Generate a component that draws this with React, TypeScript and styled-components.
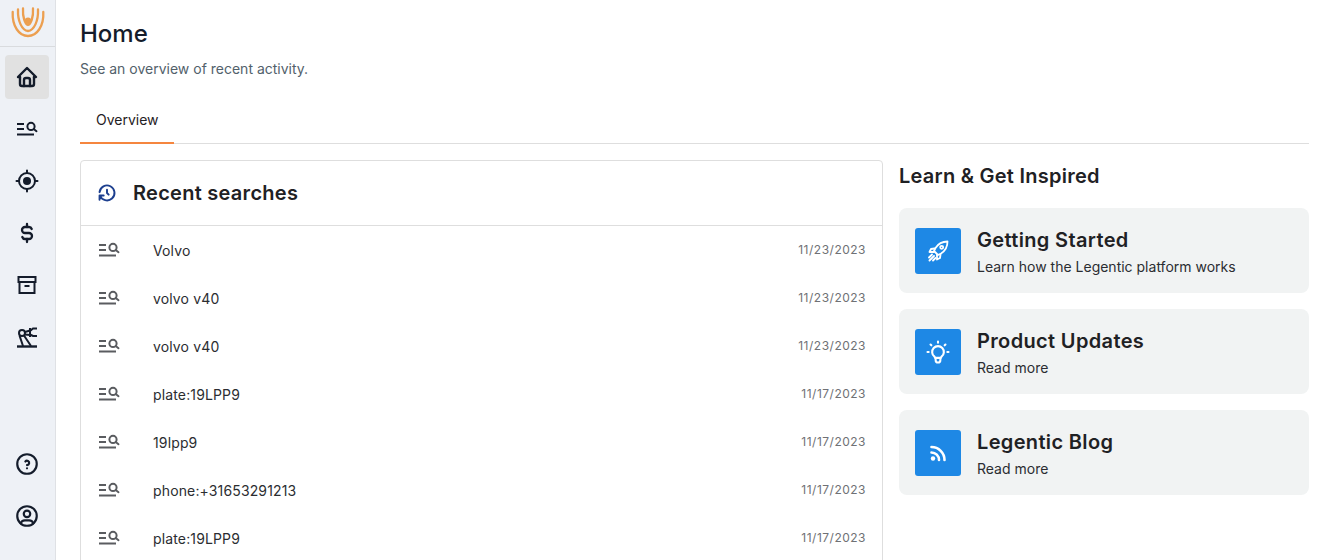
import React from 'react';
import styled, { createGlobalStyle } from 'styled-components';
import {
  TbBulb,
  TbCurrencyDollar,
  TbHelpCircle,
  TbHistory,
  TbHome,
  TbUserCircle
} from 'react-icons/tb';

const GlobalStyle = createGlobalStyle`
  html, body {
    margin: 0;
    height: 100%;
    overflow: hidden;
    background: #fff;
    font-family: Inter, "Liberation Sans", sans-serif;
    color: #1f2124;
  }
  * { box-sizing: border-box; }
`;

const searches = [
  { term: 'Volvo', date: '11/23/2023' },
  { term: 'volvo v40', date: '11/23/2023' },
  { term: 'volvo v40', date: '11/23/2023' },
  { term: 'plate:19LPP9', date: '11/17/2023' },
  { term: '19lpp9', date: '11/17/2023' },
  { term: 'phone:+31653291213', date: '11/17/2023' },
  { term: 'plate:19LPP9', date: '11/17/2023' }
];

const LogoIcon = () => (
  <svg width="34" height="34" viewBox="0 0 34 34" fill="none" stroke="#ec9f50" strokeWidth="2.300" strokeLinecap="round">
    <circle cx="17" cy="14.700" r="3.200" fill="#ec9f50" stroke="none" />
    <path d="M12 2.500C11.500 11 14 18 17 19C20 18 22.500 11 22 2.500" />
    <path d="M7 3.500C6.500 15 11 24.500 17 25C23 24.500 27.500 15 27 3.500" />
    <path d="M1.700 6C1 20 8 30 17 30C26 30 33 20 32.300 6" />
  </svg>
);

const SearchListIcon = () => (
  <svg width="24" height="24" viewBox="0 0 24 24" fill="none" stroke="currentColor" strokeWidth="2">
    <path d="M2 7h7M2 12h7M2 17.500h17" />
    <circle cx="16" cy="9.400" r="3.600" />
    <path d="M18.700 12l2.800 2.200" strokeLinecap="round" />
  </svg>
);

const TargetIcon = () => (
  <svg width="24" height="24" viewBox="0 0 24 24" fill="none" stroke="currentColor" strokeWidth="2" strokeLinecap="round">
    <circle cx="12" cy="12" r="8" />
    <circle cx="12" cy="12" r="4" fill="currentColor" stroke="none" />
    <path d="M12 1.500V4M12 20v2.500M1.500 12H4M20 12h2.500" />
  </svg>
);

const ArchiveIcon = () => (
  <svg width="24" height="24" viewBox="0 0 24 24" fill="none" stroke="currentColor" strokeWidth="2">
    <path d="M3.500 4h17v5h-17z" />
    <path d="M4.500 9v11h15V9" />
    <path d="M9.500 13h5" />
  </svg>
);

const ArmIcon = () => (
  <svg width="24" height="24" viewBox="0 0 24 24" fill="none" stroke="currentColor" strokeWidth="2">
    <path d="M2 21.500h20" strokeWidth="2.400" />
    <circle cx="7" cy="8" r="3" />
    <path d="M4.500 10.500L8 21M9 10.500L16 21" />
    <path d="M10 7l5-1.500M10 9.500l5 .5M15 3v9" />
    <path d="M15 6l3-2.500h4M15 9.500l3 1.500h4" />
  </svg>
);

const RocketIcon = () => (
  <svg width="24" height="24" viewBox="0 0 24 24" fill="none" stroke="#fff" strokeWidth="1.800" strokeLinejoin="round" strokeLinecap="round">
    <path d="M21.500 2.500C16.500 2.500 12 5 9.500 9L8 12l4 4 3-1.500c4-2.500 6.500-7 6.500-12z" />
    <path d="M8.500 9.500L5 10l-1.500 3H8M14.500 15.500L14 19l-3 1.500V16" />
    <circle cx="15.700" cy="8.300" r="1.500" />
    <path d="M6 15.500l-3 3M8 17l-4.500 4.500M9.500 19L7 21.500" />
  </svg>
);

const RssIcon = () => (
  <svg width="24" height="24" viewBox="0 0 24 24" fill="none" stroke="#fff" strokeWidth="2.600" strokeLinecap="round">
    <circle cx="7" cy="17.500" r="2.200" fill="#fff" stroke="none" />
    <path d="M5.500 11.500a7.500 7.500 0 0 1 7.500 7.500" />
    <path d="M5.500 6a13 13 0 0 1 13 13" />
  </svg>
);

const learnCards = [
  { title: 'Getting Started', text: 'Learn how the Legentic platform works', icon: <RocketIcon /> },
  { title: 'Product Updates', text: 'Read more', icon: <TbBulb size={28} strokeWidth={1.8} /> },
  { title: 'Legentic Blog', text: 'Read more', icon: <RssIcon /> }
];

const App = () => {
  return (
    <>
      <GlobalStyle />
      <S.Page>
        <S.Sidebar>
          <S.LogoArea>
            <LogoIcon />
          </S.LogoArea>
          <S.NavTop>
            <S.NavButton $active><TbHome size={24} strokeWidth={2.4} /></S.NavButton>
            <S.NavButton><SearchListIcon /></S.NavButton>
            <S.NavButton><TargetIcon /></S.NavButton>
            <S.NavButton><TbCurrencyDollar size={24} strokeWidth={2.3} /></S.NavButton>
            <S.NavButton><ArchiveIcon /></S.NavButton>
            <S.NavButton><ArmIcon /></S.NavButton>
          </S.NavTop>
          <S.NavBottom>
            <S.NavButton><TbHelpCircle size={26} /></S.NavButton>
            <S.NavButton><TbUserCircle size={26} /></S.NavButton>
          </S.NavBottom>
        </S.Sidebar>
        <S.Main>
          <S.Title>Home</S.Title>
          <S.Subtitle>See an overview of recent activity.</S.Subtitle>
          <S.Tabs>
            <S.Tab>Overview</S.Tab>
          </S.Tabs>
          <S.Columns>
            <S.RecentCard>
              <S.RecentHeader>
                <TbHistory size={20} color="#1d3f8f" strokeWidth={2.3} />
                <S.RecentTitle>Recent searches</S.RecentTitle>
              </S.RecentHeader>
              {searches.map((search, index) => (
                <S.RecentRow key={index}>
                  <S.RowIcon><SearchListIcon /></S.RowIcon>
                  <S.RowTerm>{search.term}</S.RowTerm>
                  <S.RowDate>{search.date}</S.RowDate>
                </S.RecentRow>
              ))}
            </S.RecentCard>
            <S.Learn>
              <S.LearnTitle>Learn &amp; Get Inspired</S.LearnTitle>
              <S.LearnList>
                {learnCards.map((card) => (
                  <S.LearnCard key={card.title}>
                    <S.LearnIcon>{card.icon}</S.LearnIcon>
                    <div>
                      <S.LearnCardTitle>{card.title}</S.LearnCardTitle>
                      <S.LearnCardText>{card.text}</S.LearnCardText>
                    </div>
                  </S.LearnCard>
                ))}
              </S.LearnList>
            </S.Learn>
          </S.Columns>
        </S.Main>
      </S.Page>
    </>
  );
};

export default App;

const S = {
  Page: styled.div`
    display: flex;
    height: 560px;
    overflow: hidden;
  `,
  Sidebar: styled.nav`
    display: flex;
    flex-direction: column;
    flex-shrink: 0;
    width: 56px;
    height: 100%;
    padding-bottom: 22px;
    background: #eef1f6;
    border-right: 1px solid #dfe1e5;
  `,
  LogoArea: styled.div`
    display: flex;
    align-items: center;
    justify-content: center;
    height: 47px;
    margin-bottom: 8px;
    border-bottom: 1px solid #d9dbde;
  `,
  NavTop: styled.div`
    display: flex;
    flex-direction: column;
    gap: 8px;
    padding-left: 5px;
  `,
  NavBottom: styled.div`
    display: flex;
    flex-direction: column;
    gap: 8px;
    margin-top: auto;
    padding-left: 5px;
  `,
  NavButton: styled.div<{ $active?: boolean }>`
    display: flex;
    align-items: center;
    justify-content: center;
    width: 44px;
    height: 44px;
    border-radius: 4px;
    color: #141c2b;
    background: ${(props) => (props.$active ? '#e1e1e1' : 'transparent')};
  `,
  Main: styled.main`
    flex: 1;
    min-width: 0;
    padding: 20px 20px 0 24px;
  `,
  Title: styled.h1`
    margin: 0;
    font-size: 24px;
    line-height: 28px;
    font-weight: 450;
    color: #141c2b;
  `,
  Subtitle: styled.p`
    margin: 13px 0 0;
    font-size: 14px;
    line-height: 16px;
    color: #52616b;
  `,
  Tabs: styled.div`
    display: flex;
    margin-top: 20px;
    border-bottom: 1px solid #dedede;
  `,
  Tab: styled.div`
    padding: 15px 15px 14px 16px;
    margin-bottom: -1px;
    font-size: 14px;
    line-height: 16px;
    border-bottom: 2px solid #f5863f;
  `,
  Columns: styled.div`
    display: grid;
    grid-template-columns: 803px 410px;
    gap: 16px;
    margin-top: 16px;
  `,
  RecentCard: styled.section`
    border: 1px solid #dedede;
    border-radius: 4px 4px 0 0;
  `,
  RecentHeader: styled.header`
    display: flex;
    align-items: center;
    gap: 16px;
    height: 65px;
    padding-left: 16px;
    border-bottom: 1px solid #dedede;
  `,
  RecentTitle: styled.h2`
    margin: 0;
    font-size: 20px;
    line-height: 24px;
    font-weight: 600;
    letter-spacing: 0.27px;
    color: #1f2124;
  `,
  RecentRow: styled.div`
    display: flex;
    align-items: center;
    height: 48px;
    padding: 2px 16px 0;
  `,
  RowIcon: styled.div`
    display: flex;
    width: 56px;
    margin-top: -2px;
    color: #5a5c60;
  `,
  RowTerm: styled.div`
    flex: 1;
    font-size: 14px;
    line-height: 16px;
    letter-spacing: 0.14px;
    color: #2b2d31;
  `,
  RowDate: styled.div`
    margin-top: -3px;
    font-size: 12px;
    line-height: 14px;
    letter-spacing: 0.5px;
    color: #6f7175;
  `,
  Learn: styled.section``,
  LearnTitle: styled.h2`
    margin: 3px 0 0;
    font-size: 20px;
    line-height: 26px;
    font-weight: 600;
    letter-spacing: 0.25px;
    color: #1f2124;
  `,
  LearnList: styled.div`
    display: flex;
    flex-direction: column;
    gap: 16px;
    margin-top: 19px;
  `,
  LearnCard: styled.a`
    display: flex;
    align-items: center;
    gap: 16px;
    height: 85px;
    padding: 0 16px;
    border-radius: 8px;
    background: #f1f3f3;
  `,
  LearnIcon: styled.div`
    display: flex;
    align-items: center;
    justify-content: center;
    flex-shrink: 0;
    width: 46px;
    height: 46px;
    border-radius: 3px;
    color: #fff;
    background: #1e88e5;
  `,
  LearnCardTitle: styled.div`
    font-size: 20px;
    line-height: 26px;
    font-weight: 600;
    letter-spacing: 0.35px;
    color: #1f2124;
  `,
  LearnCardText: styled.div`
    margin-top: 5px;
    font-size: 14px;
    line-height: 17px;
    color: #2b2d31;
  `
};
